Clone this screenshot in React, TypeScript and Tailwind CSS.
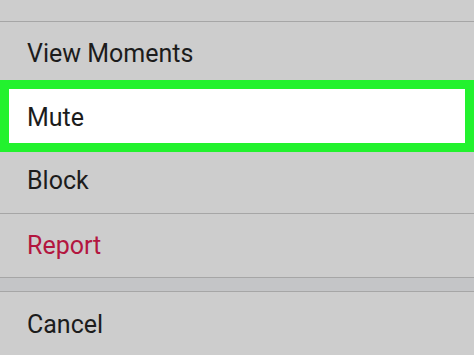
import React from "react";

export default function App() {
  return (
    <div
      className="w-[474px] h-[355px] overflow-hidden bg-[#cdcdcd] flex flex-col text-[25px] text-[#1c1c1c]"
      style={{ fontFamily: "Roboto, 'Noto Sans', sans-serif" }}
    >
      <div className="h-[21px] shrink-0" />
      <div className="h-px shrink-0 bg-[#a6a6a6]" />
      <div className="h-[58px] shrink-0 flex items-center pl-[27px] pt-[4px] leading-none">View Moments</div>
      <div className="h-[72px] shrink-0 bg-[#22f22e] p-[9px]">
        <div className="h-full bg-white flex items-center pl-[18px] pt-[2px] leading-none">Mute</div>
      </div>
      <div className="h-[61px] shrink-0 flex items-center pl-[27px] pb-[4px] leading-none">Block</div>
      <div className="h-px shrink-0 bg-[#a6a6a6]" />
      <div className="h-[63px] shrink-0 flex items-center pl-[27px] leading-none text-[#b3163f]">Report</div>
      <div className="h-px shrink-0 bg-[#a6a6a6]" />
      <div className="h-[13px] shrink-0 bg-[#c4c5c7]" />
      <div className="h-px shrink-0 bg-[#a6a6a6]" />
      <div className="h-[64px] shrink-0 flex items-center pl-[27px] leading-none">Cancel</div>
    </div>
  );
}
